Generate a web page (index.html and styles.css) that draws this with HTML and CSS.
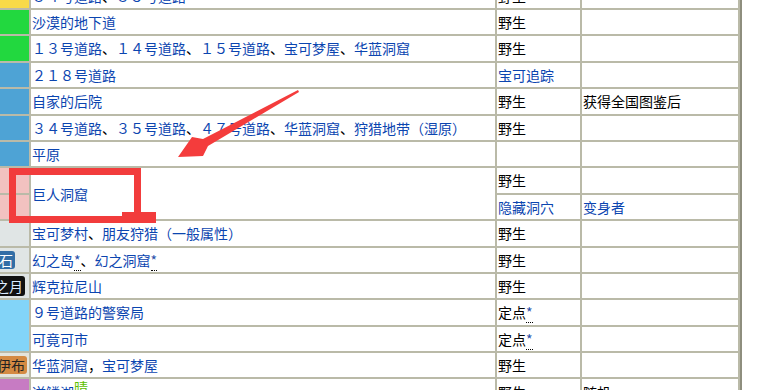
FILE: index.html
```html
<!DOCTYPE html>
<html lang="zh-CN">
<head>
<meta charset="utf-8">
<title>出现地点</title>
<link rel="stylesheet" href="styles.css">
</head>
<body>
<div class="page">
  <table class="loc">
    <colgroup>
      <col class="c-game"><col class="c-area"><col class="c-method"><col class="c-note">
    </colgroup>
    <tbody>
      <tr><td class="g g-gold"></td><td><a>３４号道路</a>、<a>３５号道路</a></td><td>野生</td><td></td></tr>
      <tr><td class="g g-green"></td><td><a>沙漠的地下道</a></td><td>野生</td><td></td></tr>
      <tr><td class="g g-green"></td><td><a>１３号道路</a>、<a>１４号道路</a>、<a>１５号道路</a>、<a>宝可梦屋</a>、<a>华蓝洞窟</a></td><td>野生</td><td></td></tr>
      <tr><td class="g g-blue"></td><td><a>２１８号道路</a></td><td><a>宝可追踪</a></td><td></td></tr>
      <tr><td class="g g-blue"></td><td><a>自家的后院</a></td><td>野生</td><td>获得全国图鉴后</td></tr>
      <tr><td class="g g-blue"></td><td><a>３４号道路</a>、<a>３５号道路</a>、<a>４７号道路</a>、<a>华蓝洞窟</a>、<a>狩猎地带（湿原）</a></td><td>野生</td><td></td></tr>
      <tr><td class="g g-blue"></td><td><a>平原</a></td><td></td><td></td></tr>
      <tr><td class="g g-pink"></td><td rowspan="2"><a>巨人洞窟</a></td><td>野生</td><td></td></tr>
      <tr><td class="g g-pink"></td><td><a>隐藏洞穴</a></td><td><a>变身者</a></td></tr>
      <tr><td class="g g-grey"></td><td><a>宝可梦村</a>、<a>朋友狩猎（一般属性）</a></td><td>野生</td><td></td></tr>
      <tr><td class="g g-grey"><div class="gbox"><span class="badge badge-as">阿尔法蓝宝石</span></div></td><td><a>幻之岛</a><span class="ex">*</span>、<a>幻之洞窟</a><span class="ex">*</span></td><td>野生</td><td></td></tr>
      <tr><td class="g g-grey"><div class="gbox"><span class="badge badge-um">究极之月</span></div></td><td><a>辉克拉尼山</a></td><td>野生</td><td></td></tr>
      <tr><td class="g g-sky" rowspan="2"></td><td><a>９号道路的警察局</a></td><td>定点<span class="ex">*</span></td><td></td></tr>
      <tr><td><a>可竟可市</a></td><td>定点<span class="ex">*</span></td><td></td></tr>
      <tr><td class="g g-beige"><div class="gbox"><span class="badge badge-ev">Let's Go! 伊布</span></div></td><td><a>华蓝洞窟</a>，<a>宝可梦屋</a></td><td>野生</td><td></td></tr>
      <tr><td class="g g-purple"></td><td><a>逆鳞湖</a><span class="wx">晴</span></td><td>野生</td><td>随机</td></tr>
    </tbody>
  </table>
  <svg class="annot" width="760" height="390" viewBox="0 0 760 390" aria-hidden="true">
    <rect x="12.5" y="171.5" width="125" height="48" fill="none" stroke="#f23c3c" stroke-width="7"/>
    <rect x="122" y="212" width="34" height="11" fill="#f23c3c"/>
    <polygon points="298,90 203,139 192,137 178,157 203,156 208,146 299,92" fill="#f43c3c"/>
  </svg>
</div>
</body>
</html>
```

FILE: styles.css
```css
html, body {
  margin: 0;
  padding: 0;
  overflow: hidden;
  background: #ffffff;
}

.page {
  position: relative;
  width: 760px;
  height: 390px;
  overflow: hidden;
}

.loc {
  table-layout: fixed;
  width: 777px;
  border-collapse: separate;
  border-spacing: 2px;
  background: #babaa8;
  border: 2px solid #8e8e7e;
  margin: -20.4px 0 0 -35px;
  font-family: "Noto Sans CJK SC", "Microsoft YaHei", sans-serif;
  font-size: 14px;
  line-height: 1.6;
  color: #000;
}

.c-game { width: 60px; }
.c-area { width: 464px; }
.c-method { width: 83px; }
.c-note { width: 156px; }

.loc td {
  background: #ffffff;
  padding: 1px 1px;
  vertical-align: middle;
  white-space: nowrap;
  overflow: hidden;
}

.loc a {
  color: #0b45b0;
  text-decoration: none;
}

.loc td.g { padding: 0; }
.g-gold { background: #f8da48 !important; }
.g-green { background: #22d83f !important; }
.g-blue { background: #4ea3d5 !important; }
.g-pink { background: #f2c2c0 !important; }
.g-grey { background: #e0e5e5 !important; }
.g-sky { background: #82d4f8 !important; }
.g-beige { background: #e4e4dc !important; }
.g-purple { background: #c77bc3 !important; }

.gbox {
  display: flex;
  justify-content: flex-end;
  align-items: center;
  height: 22px;
}

.badge {
  flex: none;
  display: inline-block;
  line-height: 18px;
  padding: 0 2px;
  border-radius: 3px;
  white-space: nowrap;
}

.badge-as {
  background: #336ea6;
  color: #ffffff;
  margin-right: 14px;
}

.badge-um {
  background: #111111;
  color: #dcecff;
  line-height: 20px;
  margin-right: 4px;
}

.badge-ev {
  background: #d48a43;
  color: #222222;
  margin-right: 2px;
}

.ex {
  color: #2a4fa8;
  border-bottom: 1px dotted #000;
}

.wx {
  color: #5cc000;
  line-height: 1;
  vertical-align: 5px;
}

.annot {
  position: absolute;
  top: 0;
  left: 0;
  pointer-events: none;
}
```
